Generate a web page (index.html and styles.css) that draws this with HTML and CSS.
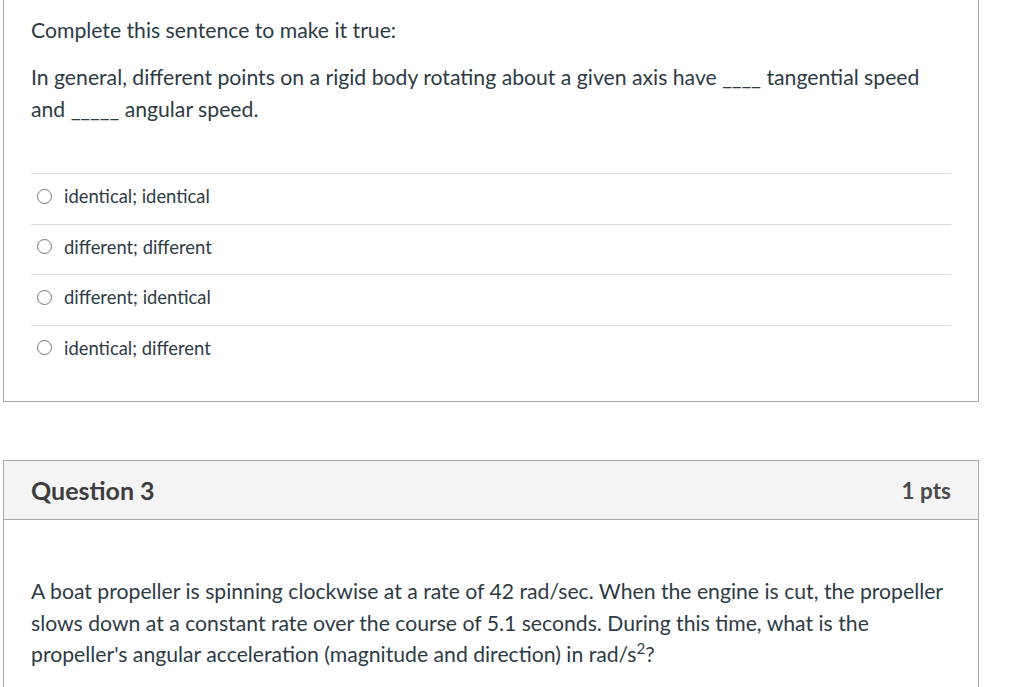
FILE: index.html
```html
<!DOCTYPE html>
<html>
<head>
<meta charset="utf-8">
<link rel="stylesheet" href="styles.css">
</head>
<body>
<div class="page">
  <section class="card card-first">
    <div class="qtext">
      <p class="p1">Complete this sentence to make it true:</p>
      <p class="p2">In general, different points on a rigid body rotating about a given axis have ____ tangential speed and _____ angular speed.</p>
    </div>
    <div class="answers">
      <label class="answer"><span class="radio"></span><span>identical; identical</span></label>
      <label class="answer"><span class="radio"></span><span>different; different</span></label>
      <label class="answer"><span class="radio"></span><span>different; identical</span></label>
      <label class="answer"><span class="radio"></span><span>identical; different</span></label>
    </div>
  </section>
  <section class="card card-second">
    <header class="qheader">
      <h2 class="qtitle">Question 3</h2>
      <span class="pts">1 pts</span>
    </header>
    <div class="qbody">
      <p class="p3">A boat propeller is spinning clockwise at a rate of 42 rad/sec. When the engine is cut, the propeller slows down at a constant rate over the course of 5.1 seconds. During this time, what is the propeller's angular acceleration (magnitude and direction) in rad/s<sup>2</sup>?</p>
    </div>
  </section>
</div>
</body>
</html>
```

FILE: styles.css
```css
* { box-sizing: border-box; }
html, body { margin: 0; padding: 0; background: #fff; }
body {
  font-family: Lato, "Open Sans", sans-serif;
  color: #2d3b45;
  overflow: hidden;
  height: 687px;
}
.page {
  padding-left: 3px;
  width: 979px;
}
.card {
  border: 1px solid #a9a9a9;
  background: #fff;
}
.card-first {
  margin-top: -20px;
  border-top: none;
  padding: 20px 27px 0 27px;
  height: 422px;
}
.qtext {
  font-size: 21.2px;
  line-height: 31.5px;
}
.qtext p { margin: 0; }
.p1 { padding-top: 14.5px; }
.p2 { margin-top: 16px !important; }
.answers {
  margin-top: 48px;
}
.answer {
  display: flex;
  align-items: center;
  height: 50.5px;
  border-top: 1px solid #dcdcdc;
  font-size: 18.4px;
  padding-left: 6px;
  gap: 12px;
  padding-bottom: 5px;
}
.radio {
  width: 15px;
  height: 15px;
  border: 1px solid #6b7780;
  border-radius: 50%;
  flex: none;
}
.card-second {
  margin-top: 58px;
}
.qheader {
  display: flex;
  justify-content: space-between;
  align-items: center;
  height: 59px;
  background: #f4f4f4;
  border-bottom: 1px solid #a9a9a9;
  padding: 0 27px;
}
.qtitle {
  margin: 0;
  font-size: 25px;
  font-weight: 700;
  color: #3d3d3d;
}
.pts {
  font-size: 22.5px;
  font-weight: 700;
  color: #4a4a4a;
}
.qbody {
  padding: 56px 27px 40px 27px;
}
.p3 {
  margin: 0;
  font-size: 21.2px;
  line-height: 31.5px;
}
.p3 sup {
  font-size: 15px;
  line-height: 0;
  vertical-align: 8px;
}
```
